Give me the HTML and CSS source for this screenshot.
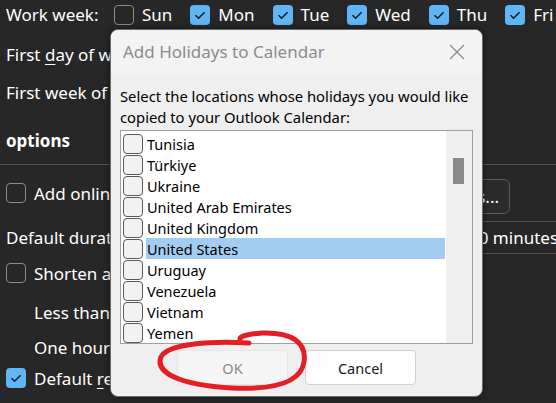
FILE: index.html
```html
<!DOCTYPE html>
<html lang="en">
<head>
    <meta charset="UTF-8">
    <title>Calendar options</title>
    <link rel="stylesheet" href="styles.css">
</head>
<body>
    <main class="options">
        <div class="row row-week">
            <span class="label">Work week:</span>
            <div class="days">
                <span class="day"><span class="cb"></span>Sun</span>
                <span class="day"><span class="cb on"><svg viewBox="0 0 20 20"><polyline points="5.5,10.2 8.6,13.2 14.6,7.2"/></svg></span>Mon</span>
                <span class="day"><span class="cb on"><svg viewBox="0 0 20 20"><polyline points="5.5,10.2 8.6,13.2 14.6,7.2"/></svg></span>Tue</span>
                <span class="day"><span class="cb on"><svg viewBox="0 0 20 20"><polyline points="5.5,10.2 8.6,13.2 14.6,7.2"/></svg></span>Wed</span>
                <span class="day"><span class="cb on"><svg viewBox="0 0 20 20"><polyline points="5.5,10.2 8.6,13.2 14.6,7.2"/></svg></span>Thu</span>
                <span class="day"><span class="cb on"><svg viewBox="0 0 20 20"><polyline points="5.5,10.2 8.6,13.2 14.6,7.2"/></svg></span>Fri</span>
            </div>
        </div>
        <div class="row row-first-day"><span>First <u>d</u>ay of week:</span></div>
        <div class="row row-first-week"><span>First week of year:</span></div>

        <h2 class="section">options</h2>

        <div class="row row-online">
            <span class="cb"></span>
            <span class="text">Add online meeting to all meetings</span>
            <button class="btn-dark">Meeting Providers...</button>
        </div>
        <div class="divider"></div>
        <div class="row row-duration">
            <span class="label-col">Default duration:</span>
            <span class="value">30 minutes</span>
        </div>
        <div class="divider"></div>
        <div class="row row-shorten">
            <span class="cb"></span>
            <span class="text">Shorten appointments and meetings</span>
        </div>
        <div class="row row-less"><span>Less than one hour:</span></div>
        <div class="row row-hour"><span>One hour or longer:</span></div>
        <div class="row row-remind">
            <span class="cb on"><svg viewBox="0 0 20 20"><polyline points="5.5,10.2 8.6,13.2 14.6,7.2"/></svg></span>
            <span class="text">Default <u>r</u>eminders:</span>
        </div>
    </main>

    <div class="dialog">
        <div class="dialog-title">
            <span>Add Holidays to Calendar</span>
            <svg class="close" viewBox="0 0 16 16"><path d="M1 1 L15 15 M15 1 L1 15"/></svg>
        </div>
        <div class="dialog-body">
            <p class="prompt">Select the locations whose holidays you would like<br>copied to your Outlook Calendar:</p>
            <div class="listbox">
                <ul class="countries">
                    <li><span class="box"></span><span class="name">Tunisia</span></li>
                    <li><span class="box"></span><span class="name">Türkiye</span></li>
                    <li><span class="box"></span><span class="name">Ukraine</span></li>
                    <li><span class="box"></span><span class="name">United Arab Emirates</span></li>
                    <li><span class="box"></span><span class="name">United Kingdom</span></li>
                    <li class="selected"><span class="box"></span><span class="name">United States</span></li>
                    <li><span class="box"></span><span class="name">Uruguay</span></li>
                    <li><span class="box"></span><span class="name">Venezuela</span></li>
                    <li><span class="box"></span><span class="name">Vietnam</span></li>
                    <li><span class="box"></span><span class="name">Yemen</span></li>
                </ul>
                <div class="scrollbar"><div class="thumb"></div></div>
            </div>
            <div class="buttons">
                <button class="btn" disabled>OK</button>
                <button class="btn">Cancel</button>
            </div>
        </div>
    </div>

    <svg class="scribble" viewBox="0 0 556 403">
        <path d="M249 343 C 213 341, 168 343, 161 357 C 155 372, 178 385, 232 388 C 276 390, 301 382, 304 362 C 307 342, 291 332, 262 333 C 250 334, 239 336, 240 339"/>
    </svg>
</body>
</html>
```

FILE: styles.css
```css
body {
    margin: 0;
    width: 556px;
    height: 403px;
    overflow: hidden;
    position: relative;
    background-color: #272727;
    color: #ffffff;
    font-family: "Noto Sans", sans-serif;
    font-size: 17px;
}
.options {
    display: flex;
    flex-direction: column;
}
.row {
    display: flex;
    align-items: center;
    padding-left: 6px;
    white-space: nowrap;
}
u {
    text-underline-offset: 3px;
}

/* checkboxes on the dark page */
.cb {
    flex: 0 0 auto;
    width: 20px;
    height: 20px;
    box-sizing: border-box;
    border: 1.5px solid #8b8b8b;
    border-radius: 4px;
    margin-right: 8px;
}
.cb.on {
    border: none;
    background-color: #60b5f5;
}
.cb svg {
    display: block;
    width: 20px;
    height: 20px;
    fill: none;
    stroke: #1a1a1a;
    stroke-width: 1.6;
}

.row-week {
    height: 29px;
}
.row-week .label {
    width: 108px;
}
.days {
    display: flex;
    gap: 18px;
}
.day {
    display: flex;
    align-items: center;
}
.row-first-day {
    height: 51px;
}
.row-first-week {
    height: 25px;
}
.section {
    margin: 12px 0 0;
    height: 47px;
    display: flex;
    align-items: center;
    padding-left: 6px;
    font-size: 17px;
    font-weight: bold;
    border-bottom: 1px solid #555555;
}
.row-online {
    height: 56px;
}
.row-online .text {
    flex: 1;
}
.btn-dark {
    margin: 6px 46px 0 0;
    height: 35px;
    padding: 0 10px 0 16px;
    background: #2b2b2b;
    color: #ffffff;
    border: 1px solid #5c5c5c;
    border-radius: 6px;
    font-family: inherit;
    font-size: 17px;
}
.divider {
    height: 1px;
    margin-left: 300px;
    background-color: #555555;
}
.row-duration {
    height: 31px;
}
.row-duration .label-col {
    width: 463px;
    flex: 0 0 auto;
}
.row-shorten {
    height: 38px;
}
.row-less {
    height: 40px;
    padding-left: 34px;
}
.row-hour {
    height: 30px;
    padding-left: 34px;
}
.row-remind {
    height: 32px;
}

/* dialog */
.dialog {
    position: absolute;
    left: 110px;
    top: 29px;
    width: 373px;
    height: 368px;
    box-sizing: border-box;
    border: 1px solid #6a6a6a;
    border-radius: 8px;
    overflow: hidden;
    background-color: #efefef;
    color: #000000;
    box-shadow: 0 0 6px rgba(0, 0, 0, 0.5);
}
.dialog-title {
    height: 43px;
    display: flex;
    align-items: center;
    justify-content: space-between;
    padding: 0 17px 0 12px;
    background-color: #f3f3f3;
    color: #8c8c8c;
    font-size: 17px;
}
.close {
    width: 16px;
    height: 16px;
    stroke: #8c8c8c;
    stroke-width: 1.3;
}
.dialog-body {
    padding: 0 9px 0 9px;
}
.prompt {
    margin: 13px 0 0;
    font-size: 14.8px;
    line-height: 21px;
}
.listbox {
    margin-top: 2px;
    width: 353px;
    height: 214px;
    box-sizing: border-box;
    border: 1px solid #a0a0a0;
    background-color: #ffffff;
    display: flex;
}
.countries {
    flex: 1;
    list-style: none;
    margin: 0;
    padding: 2px 0 0 2px;
}
.countries li {
    height: 21px;
    display: flex;
    align-items: center;
    font-size: 14.5px;
}
.box {
    width: 20px;
    height: 20px;
    box-sizing: border-box;
    border: 1px solid #5a5a5a;
    border-radius: 4px;
    background-color: #f2f2f2;
    margin-right: 3px;
}
.name {
    flex: 1;
    height: 21px;
    line-height: 22px;
    padding-left: 1px;
}
.selected .name {
    background-color: #a3cdf0;
}
.scrollbar {
    width: 26px;
    margin-left: 1px;
    background-color: #f0f0f0;
}
.thumb {
    margin: 27px 0 0 7px;
    width: 11px;
    height: 26px;
    background-color: #8a8a8a;
}
.buttons {
    display: flex;
    justify-content: center;
    gap: 17px;
    margin-top: 6px;
}
.btn {
    width: 111px;
    height: 35px;
    border: 1px solid #d0d0d0;
    border-radius: 4px;
    background-color: #fdfdfd;
    color: #1a1a1a;
    font-family: inherit;
    font-size: 14.5px;
}
.btn:disabled {
    border-color: #e6e6e6;
    background-color: #f5f5f5;
    color: #8a8a8a;
}

.scribble {
    position: absolute;
    left: 0;
    top: 0;
    width: 556px;
    height: 403px;
    pointer-events: none;
    fill: none;
    stroke: #e31e24;
    stroke-width: 5;
    stroke-linecap: round;
}
```
